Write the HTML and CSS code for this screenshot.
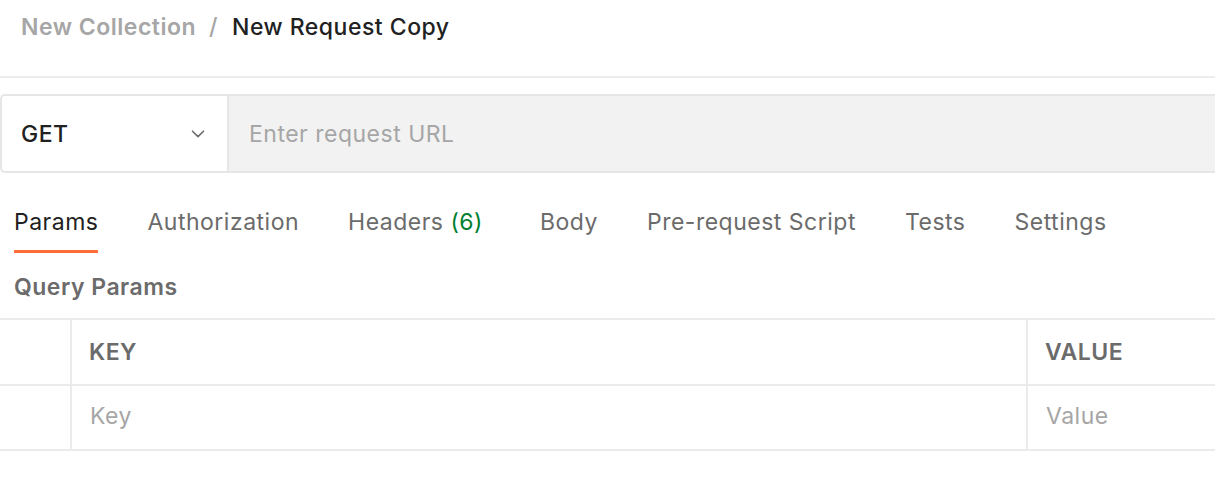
FILE: index.html
```html
<!DOCTYPE html>
<html lang="en">
<head>
<meta charset="utf-8">
<title>New Request Copy</title>
<link rel="stylesheet" href="styles.css">
</head>
<body>
<div class="page">
  <header class="crumbs">
    <span class="crumb-parent">New Collection</span>
    <span class="crumb-sep">/</span>
    <span class="crumb-current">New Request Copy</span>
  </header>

  <div class="urlbar">
    <div class="method">
      <span class="method-name">GET</span>
      <svg class="chevron" width="14" height="8" viewBox="0 0 14 8" aria-hidden="true">
        <path d="M1.5 1.2 L7 6.6 L12.5 1.2" fill="none" stroke="#6b6b6b" stroke-width="1.6" stroke-linecap="round" stroke-linejoin="round"/>
      </svg>
    </div>
    <div class="url-input">Enter request URL</div>
  </div>

  <nav class="tabs">
    <span class="tab active">Params</span>
    <span class="tab">Authorization</span>
    <span class="tab tab-headers">Headers <span class="count">(6)</span></span>
    <span class="tab">Body</span>
    <span class="tab">Pre-request Script</span>
    <span class="tab">Tests</span>
    <span class="tab">Settings</span>
  </nav>

  <div class="section-title">Query Params</div>

  <div class="table">
    <div class="row head">
      <div class="cell check"></div>
      <div class="cell key">KEY</div>
      <div class="cell value">VALUE</div>
    </div>
    <div class="row">
      <div class="cell check"></div>
      <div class="cell key placeholder">Key</div>
      <div class="cell value placeholder">Value</div>
    </div>
  </div>
</div>
</body>
</html>
```

FILE: styles.css
```css
* { box-sizing: border-box; }

html, body {
  margin: 0;
  padding: 0;
  background: #ffffff;
  overflow: hidden;
}

body {
  font-family: Inter, "Noto Sans", "Liberation Sans", sans-serif;
  font-size: 23px;
  line-height: 30px;
  letter-spacing: 0.5px;
  color: #212121;
}

.page {
  width: 1215px;
}

.crumbs {
  height: 78px;
  padding: 12px 0 0 21px;
  border-bottom: 2px solid #ededed;
  font-weight: 600;
  display: flex;
}

.crumb-parent { color: #a6a6a6; }
.crumb-sep { color: #a6a6a6; margin: 0 14px 0 13px; font-weight: 500; }
.crumb-current { color: #212121; font-weight: 500; }

.urlbar {
  margin-top: 16px;
  height: 79px;
  display: flex;
  border: 2px solid #e6e6e6;
  border-right: none;
  border-radius: 5px 0 0 5px;
  width: 1230px;
}

.method {
  width: 227px;
  display: flex;
  align-items: center;
  justify-content: space-between;
  padding: 0 22px 0 19px;
  border-right: 2px solid #e6e6e6;
  background: #ffffff;
  border-radius: 4px 0 0 4px;
}

.method-name {
  font-weight: 500;
  color: #212121;
}

.chevron { display: block; }

.url-input {
  flex: 1;
  background: #f2f2f2;
  color: #a6a6a6;
  display: flex;
  align-items: center;
  padding-left: 20px;
  padding-top: 1px;
}

.tabs {
  margin-top: 34px;
  display: flex;
  gap: 49px;
  padding-left: 14px;
  height: 46px;
}

.tab {
  color: #6b6b6b;
  height: 46px;
  border-bottom: 3px solid transparent;
  white-space: nowrap;
}

.tab.active {
  color: #212121;
  border-bottom-color: #ff6c37;
}

.tab-headers { margin-right: 8px; }

.count { color: #007f31; }

.section-title {
  margin-top: 19px;
  padding-left: 14px;
  font-weight: 600;
  color: #6b6b6b;
}

.table {
  margin-top: 16px;
  border-top: 2px solid #ebebeb;
  width: 1215px;
}

.row {
  display: grid;
  grid-template-columns: 70px 956px 1fr;
  height: 65px;
  border-bottom: 2px solid #ebebeb;
}

.row.head { height: 66px; }

.cell {
  display: flex;
  align-items: center;
  padding-left: 17px;
}

.cell.check { padding: 0; }

.cell.key { border-left: 2px solid #ebebeb; }
.cell.value { border-left: 2px solid #ebebeb; }

.head .cell {
  font-weight: 600;
  color: #6b6b6b;
}

.placeholder {
  color: #a6a6a6;
  padding-left: 18px;
  padding-bottom: 3px;
}
```
